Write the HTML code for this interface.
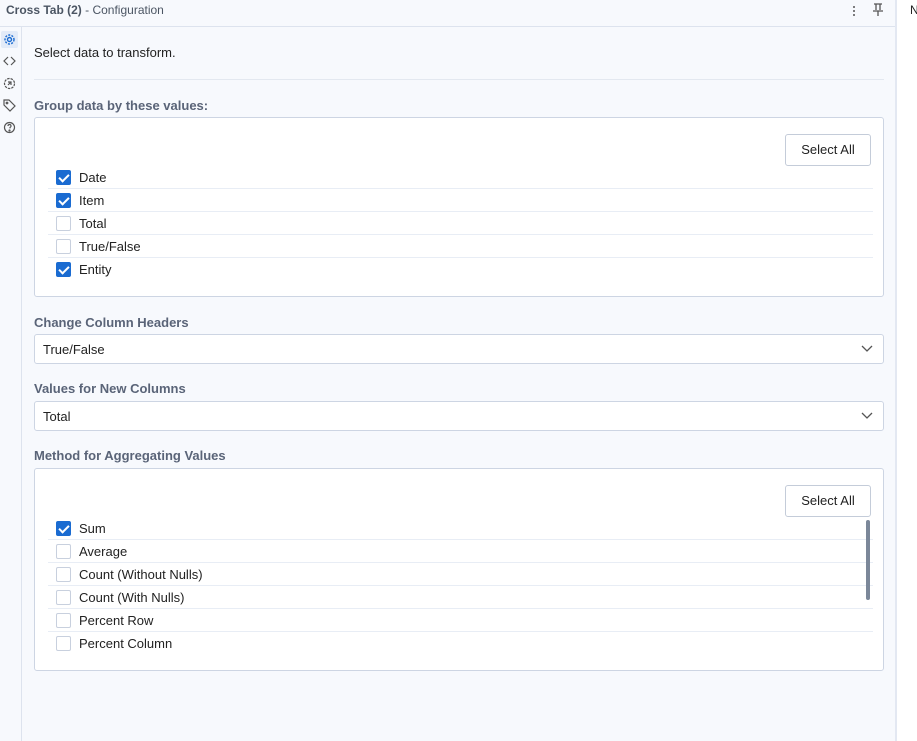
<!DOCTYPE html><html><head><style>
*{box-sizing:border-box;margin:0;padding:0}
body{width:917px;height:741px;background:#fff;font-family:"Liberation Sans",sans-serif;position:relative;overflow:hidden;color:#1f2937}
.panel{position:absolute;left:0;top:0;width:897px;height:741px;background:#f7f9fd;border-right:2px solid #e3e8f2}
.hdr{position:absolute;left:0;top:0;width:895px;height:27px;border-bottom:1px solid #dde3ee}
.hdr .t{position:absolute;left:6px;top:3px;font-size:12px;color:#4b5563}
.side{position:absolute;left:0;top:27px;width:22px;height:714px;border-right:1px solid #dde3ee}
.a{position:absolute;font-size:13px;color:#222}
.lbl{position:absolute;left:34px;font-size:13px;color:#5a6478;font-weight:bold}
.box{position:absolute;left:34px;width:850px;background:#fff;border:1px solid #cdd5e3;border-radius:3px}
.btn{position:absolute;right:12px;width:86px;height:32px;border:1px solid #c4ccd9;border-radius:3px;background:#fff;font-size:13px;text-align:center;line-height:30px;color:#222}
.row{position:absolute;left:13px;width:825px;height:23px;border-bottom:1px solid #e8edf5;font-size:13px;line-height:23px;padding-left:31px;color:#222}
.cb{position:absolute;left:8px;top:4px;width:15px;height:15px;border:1px solid #c8d0de;border-radius:2px;background:#fff}
.cb.on{background:#1a6bd1;border-color:#1a6bd1}
.cb.on:after{content:"";position:absolute;left:4px;top:1px;width:4px;height:8px;border:solid #fff;border-width:0 2px 2px 0;transform:rotate(45deg)}
.sel{position:absolute;left:34px;width:850px;height:30px;background:#fff;border:1px solid #cdd5e3;border-radius:3px;font-size:13px;line-height:29px;padding-left:8px;color:#222}
.sel svg{position:absolute;right:10px;top:10px}
</style></head><body>
<div class="panel">
<div class="hdr"><span class="t"><b>Cross Tab (2)</b> - Configuration</span>
<svg style="position:absolute;left:850px;top:4px" width="8" height="14"><circle cx="4" cy="3" r="1" fill="#555"/><circle cx="4" cy="7" r="1" fill="#555"/><circle cx="4" cy="11" r="1" fill="#555"/></svg>
<svg style="position:absolute;left:872px;top:3px" width="12" height="14" fill="none" stroke="#555" stroke-width="1.3"><path d="M2 1h8M4 1v6M8 1v6M1 8h10M6 8v5"/></svg>
</div>
<div class="side">
<div style="position:absolute;left:1px;top:4px;width:17px;height:17px;background:#e3ebf8;border-radius:2px"></div>
<svg style="position:absolute;left:3px;top:6px" width="13" height="13" fill="none" stroke="#1a6bd1" stroke-width="1.4"><circle cx="6.5" cy="6.5" r="4.5" stroke-dasharray="2 1.3"/><circle cx="6.5" cy="6.5" r="2"/></svg>
<svg style="position:absolute;left:3px;top:29px" width="13" height="10" fill="none" stroke="#555" stroke-width="1.2"><path d="M5 1L1 5l4 4M8 1l4 4-4 4"/></svg>
<svg style="position:absolute;left:3px;top:50px" width="13" height="13" fill="none" stroke="#555" stroke-width="1.2"><circle cx="6.5" cy="6.5" r="5" stroke-dasharray="2.5 1"/><path d="M5 8l3-3M5 5h3v3"/></svg>
<svg style="position:absolute;left:3px;top:72px" width="13" height="13" fill="none" stroke="#555" stroke-width="1.2"><path d="M1 1h5l6 6-5 5-6-6z"/><circle cx="4" cy="4" r="0.8"/></svg>
<svg style="position:absolute;left:3px;top:94px" width="13" height="13" fill="none" stroke="#555" stroke-width="1.2"><circle cx="6.5" cy="6.5" r="5"/><path d="M5 5a1.5 1.5 0 1 1 2 1.4v1"/><circle cx="6.5" cy="9.5" r=".5"/></svg>
</div>
<div class="a" style="left:34px;top:45px">Select data to transform.</div>
<div style="position:absolute;left:34px;top:79px;width:850px;height:1px;background:#e3e8f0"></div>
<div class="lbl" style="top:98px">Group data by these values:</div>
<div class="box" style="top:117px;height:180px">
<div class="btn" style="top:16px">Select All</div>
<div class="row" style="top:48px"><span class="cb on"></span>Date</div>
<div class="row" style="top:71px"><span class="cb on"></span>Item</div>
<div class="row" style="top:94px"><span class="cb"></span>Total</div>
<div class="row" style="top:117px"><span class="cb"></span>True/False</div>
<div class="row" style="top:140px;border:none"><span class="cb on"></span>Entity</div>
</div>
<div class="lbl" style="top:315px">Change Column Headers</div>
<div class="sel" style="top:334px">True/False<svg width="12" height="8" fill="none" stroke="#555" stroke-width="1.3"><path d="M1 1l5 5 5-5"/></svg></div>
<div class="lbl" style="top:381px">Values for New Columns</div>
<div class="sel" style="top:401px">Total<svg width="12" height="8" fill="none" stroke="#555" stroke-width="1.3"><path d="M1 1l5 5 5-5"/></svg></div>
<div class="lbl" style="top:448px">Method for Aggregating Values</div>
<div class="box" style="top:468px;height:203px">
<div class="btn" style="top:16px">Select All</div>
<div class="row" style="top:48px"><span class="cb on"></span>Sum</div>
<div class="row" style="top:71px"><span class="cb"></span>Average</div>
<div class="row" style="top:94px"><span class="cb"></span>Count (Without Nulls)</div>
<div class="row" style="top:117px"><span class="cb"></span>Count (With Nulls)</div>
<div class="row" style="top:140px"><span class="cb"></span>Percent Row</div>
<div class="row" style="top:163px;border:none"><span class="cb"></span>Percent Column</div>
<div style="position:absolute;left:831px;top:51px;width:4px;height:80px;background:#7b8799;border-radius:2px"></div>
</div>
</div>
<div style="position:absolute;left:910px;top:3px;font-size:12px;color:#222">N</div>
</body></html>
